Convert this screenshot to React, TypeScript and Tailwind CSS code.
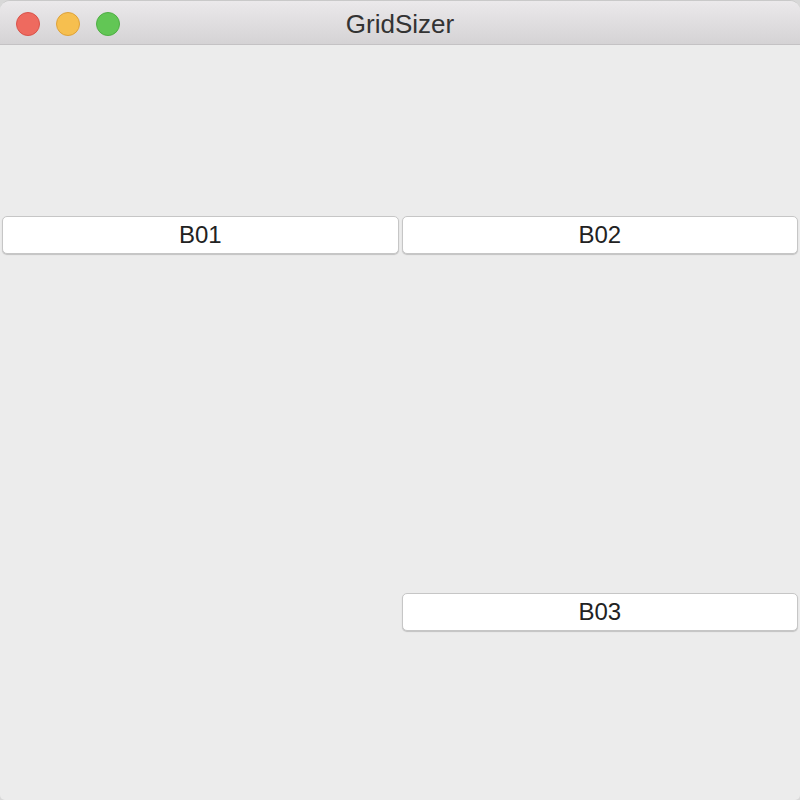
export default function App() {
  const font = { fontFamily: '"Helvetica Neue", "Liberation Sans", Arial, sans-serif' };
  return (
    <div className="w-[800px] h-[800px] bg-[#d8d8d8]" style={font}>
      <div className="w-full h-full flex flex-col bg-[#ececec] rounded-t-[10px] rounded-b-[5px] overflow-hidden border-t border-[#c9c9c9]">
        {/* Title bar */}
        <div className="relative h-[44px] shrink-0 flex items-center justify-center bg-gradient-to-b from-[#ebe9eb] to-[#d5d3d5] border-b border-[#c4c2c4]">
          <div className="absolute left-[16px] top-[11px] flex gap-[16px]">
            <span className="w-[24px] h-[24px] rounded-full bg-[#ee6a5f] border border-[#d9534a]" />
            <span className="w-[24px] h-[24px] rounded-full bg-[#f6bf4f] border border-[#dea23a]" />
            <span className="w-[24px] h-[24px] rounded-full bg-[#62c655] border border-[#4fae44]" />
          </div>
          <span className="text-[26px] text-[#333] leading-none pt-[3px]">GridSizer</span>
        </div>
        {/* Grid content */}
        <div className="flex-1 grid grid-cols-2 grid-rows-2 px-[2px] pt-[2px] gap-x-[3px]">
          <div className="flex items-center">
            <GridButton label="B01" />
          </div>
          <div className="flex items-center">
            <GridButton label="B02" />
          </div>
          <div />
          <div className="flex items-center">
            <GridButton label="B03" />
          </div>
        </div>
      </div>
    </div>
  );
}

function GridButton({ label }: { label: string }) {
  return (
    <button className="w-full h-[38px] bg-white rounded-[5px] border border-[#c6c6c6] shadow-[0_1px_1px_rgba(0,0,0,0.18)] text-[24px] text-[#222] flex items-center justify-center">
      {label}
    </button>
  );
}
